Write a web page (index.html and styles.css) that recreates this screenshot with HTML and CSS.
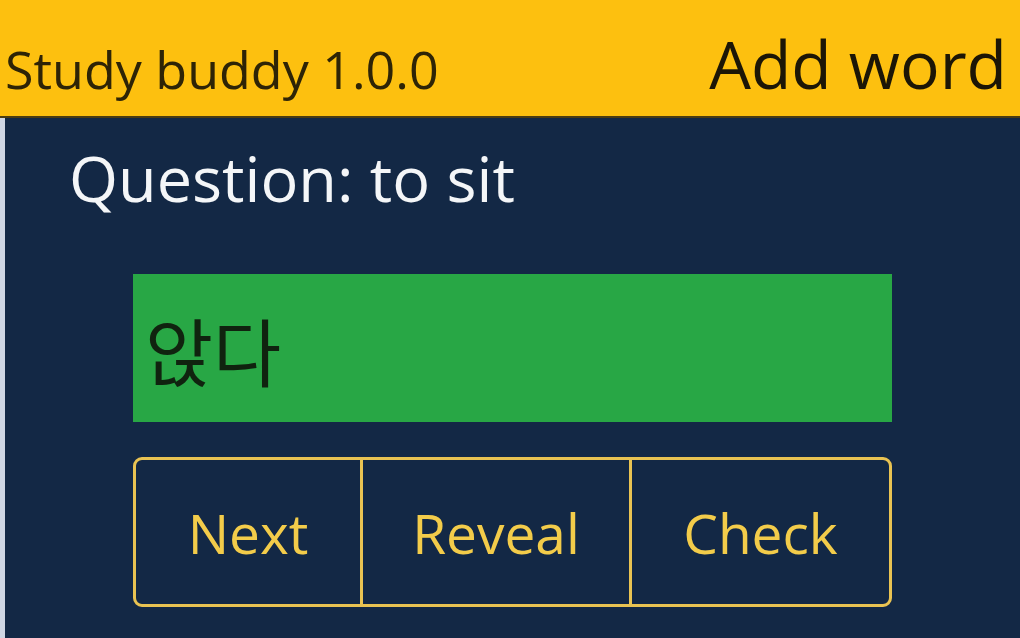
FILE: index.html
```html
<!DOCTYPE html>
<html lang="en">
<head>
<meta charset="utf-8">
<title>Study buddy</title>
<link rel="stylesheet" href="styles.css">
</head>
<body>
<div class="app">
  <header class="topbar">
    <span class="brand">Study buddy 1.0.0</span>
    <span class="add-word">Add word</span>
  </header>
  <main class="main">
    <div class="question">Question: to sit</div>
    <div class="answer-area">
      <div class="answer-box" lang="ko">앉다</div>
      <div class="btn-group">
        <button class="btn btn-next">Next</button>
        <button class="btn btn-reveal">Reveal</button>
        <button class="btn btn-check">Check</button>
      </div>
    </div>
  </main>
</div>
</body>
</html>
```

FILE: styles.css
```css
html, body {
  margin: 0;
  padding: 0;
  height: 100%;
}
body {
  background: #cfd6e3;
  font-family: "Open Sans", "Noto Sans", "Noto Sans CJK KR", sans-serif;
  overflow: hidden;
}
.app {
  display: flex;
  flex-direction: column;
  height: 100%;
}
.topbar {
  height: 118px;
  flex: none;
  box-sizing: border-box;
  background: #fdc00f;
  border-bottom: 2px solid #4a3c12;
  display: flex;
  justify-content: space-between;
  align-items: baseline;
  padding: 30px 13px 0 5px;
}
.brand {
  font-size: 52px;
  line-height: 1;
  color: #2e2406;
}
.add-word {
  font-size: 66px;
  line-height: 1;
  color: #1c1606;
}
.main {
  flex: 1;
  background: #132845;
  margin-left: 5px;
  padding-top: 22px;
}
.question {
  font-size: 63px;
  line-height: 76px;
  color: #f4f6f8;
  padding-left: 64px;
}
.answer-area {
  margin-left: 128px;
  width: 759px;
  margin-top: 58px;
  display: flex;
  flex-direction: column;
  gap: 35px;
}
.answer-box {
  height: 148px;
  background: #28a745;
  display: flex;
  align-items: center;
  padding-left: 12px;
  font-family: "Noto Sans CJK KR", sans-serif;
  font-size: 74px;
  color: #10230f;
}
.btn-group {
  display: flex;
  height: 150px;
  box-sizing: border-box;
  border: 3px solid #e9c352;
  border-radius: 9px;
  overflow: hidden;
}
.btn {
  box-sizing: border-box;
  background: transparent;
  border: none;
  color: #f3cc4a;
  font-family: "Open Sans", "Noto Sans", sans-serif;
  font-size: 55px;
  font-weight: 500;
  line-height: 1;
  padding: 0;
  margin: 0;
}
.btn + .btn {
  border-left: 3px solid #e9c352;
}
.btn-next { width: 224px; }
.btn-reveal { width: 269px; }
.btn-check { flex: 1; }
```
